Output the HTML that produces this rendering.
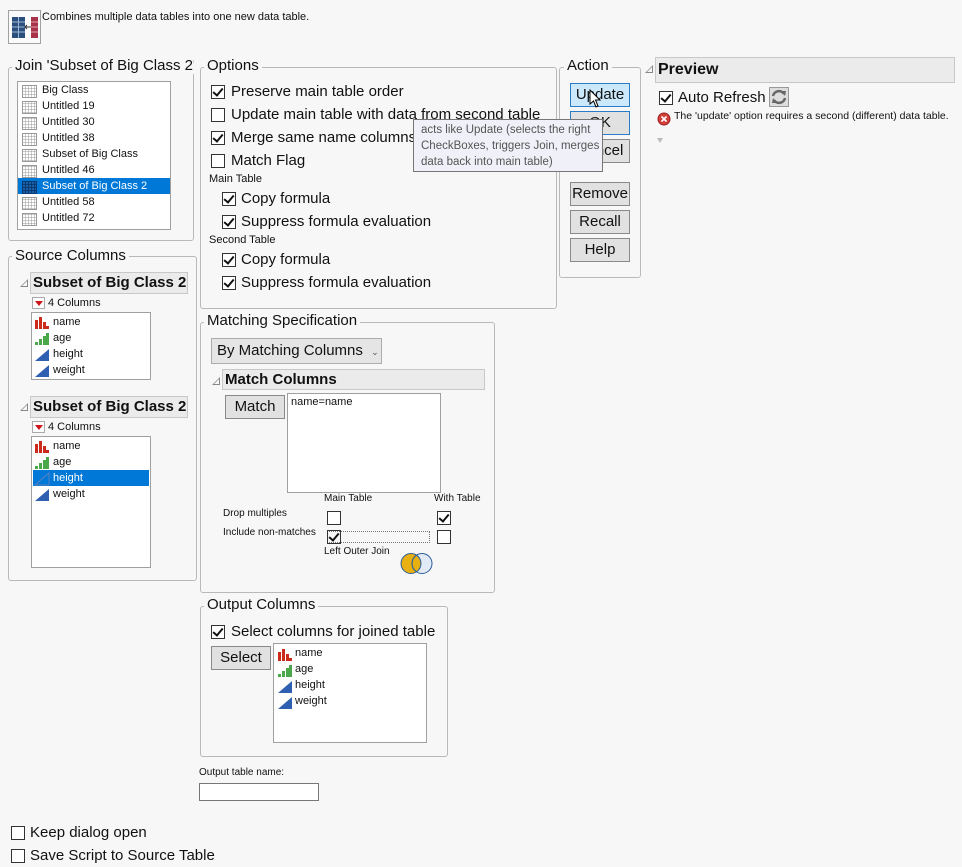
<!DOCTYPE html>
<html><head><meta charset="utf-8"><style>
*{box-sizing:border-box}
body{margin:0;width:962px;height:867px;background:#f7f7f7;font-family:"Segoe UI","Liberation Sans",sans-serif;color:#111;position:relative;overflow:hidden}
.a{position:absolute;white-space:nowrap}
.l15{font-size:15px;line-height:18px}
.s11{font-size:11px;line-height:14px}
.s10{font-size:10px;line-height:12px}
.grp{position:absolute;border:1px solid #b9b9b9;border-radius:3px}
.leg{position:absolute;background:#f7f7f7;padding:0 3px;font-size:15px;line-height:16px;white-space:nowrap}
.cb{position:absolute;width:14px;height:14px;border:1px solid #333;background:#fff}
.cb.k::after{content:"";position:absolute;left:3px;top:0px;width:4px;height:8px;border:solid #111;border-width:0 2px 2px 0;transform:rotate(40deg)}
.list{position:absolute;background:#fff;border:1px solid #a0a0a0}
.btn{position:absolute;background:#e1e1e1;border:1px solid #8a8a8a;font-size:15px;line-height:22px;text-align:center}
.hdr{position:absolute;background:#ebebeb;border:1px solid #c8c8c8;font-weight:bold;font-size:15px;line-height:19px;padding-left:2px}
.tri{position:absolute;width:0;height:0;border-left:8px solid transparent;border-bottom:8px solid #888}
.tri::after{content:"";position:absolute;left:-6px;top:2px;border-left:5px solid transparent;border-bottom:5px solid #f7f7f7}
.row{position:absolute;font-size:11px;line-height:16px;height:16px}
</style></head><body>

<!-- top icon -->
<div class="a" style="left:8px;top:10px;width:33px;height:34px;border:1px solid #a0a0a0;background:#fafafa">
<svg width="31" height="32" viewBox="0 0 31 32"><rect x="3" y="6" width="13" height="21" fill="#2b4f7d"/><g stroke="#9fb8d8" stroke-width="1"><line x1="3" y1="11" x2="16" y2="11"/><line x1="3" y1="16" x2="16" y2="16"/><line x1="3" y1="21" x2="16" y2="21"/><line x1="9.5" y1="6" x2="9.5" y2="27"/></g><rect x="22" y="6" width="7" height="21" fill="#a8324a"/><g stroke="#e2a0b0"><line x1="22" y1="11" x2="29" y2="11"/><line x1="22" y1="16" x2="29" y2="16"/><line x1="22" y1="21" x2="29" y2="21"/></g><line x1="16" y1="16" x2="22" y2="16" stroke="#333"/><path d="M18 14l-2 2 2 2" stroke="#333" fill="none"/></svg></div>
<div class="a s11" style="left:42px;top:10px">Combines multiple data tables into one new data table.</div>

<!-- Join group -->
<div class="grp" style="left:8px;top:67px;width:186px;height:174px"></div>
<div class="leg" style="left:12px;top:58px;width:182px;overflow:hidden">Join 'Subset of Big Class 2' w</div>
<div class="list" style="left:17px;top:81px;width:154px;height:149px">
<svg class="a" style="left:4px;top:3px" width="18" height="144">
<defs><pattern id="g" width="3" height="3" patternUnits="userSpaceOnUse"><rect width="3" height="3" fill="#fff"/><path d="M0 0H3M0 0V3" stroke="#999" stroke-width="1"/></pattern></defs>
<g fill="url(#g)" stroke="#999"><rect x="0.5" y="0.5" width="14" height="12"/><rect x="0.5" y="16.5" width="14" height="12"/><rect x="0.5" y="32.5" width="14" height="12"/><rect x="0.5" y="48.5" width="14" height="12"/><rect x="0.5" y="64.5" width="14" height="12"/><rect x="0.5" y="80.5" width="14" height="12"/><rect x="0.5" y="112.5" width="14" height="12"/><rect x="0.5" y="128.5" width="14" height="12"/></g></svg>
<div class="a" style="left:0;top:96px;width:152px;height:16px;background:#0078d7"></div>
<svg class="a" style="left:4px;top:99px" width="16" height="14"><rect x="0.5" y="0.5" width="14" height="12" fill="#1b5fa8" stroke="#0a3b70"/><path d="M0 3.5H15M0 6.5H15M0 9.5H15M3.5 0V13M6.5 0V13M9.5 0V13M12.5 0V13" stroke="#0a3b70"/></svg>
<div class="row" style="left:24px;top:0">Big Class</div>
<div class="row" style="left:24px;top:16px">Untitled 19</div>
<div class="row" style="left:24px;top:32px">Untitled 30</div>
<div class="row" style="left:24px;top:48px">Untitled 38</div>
<div class="row" style="left:24px;top:64px">Subset of Big Class</div>
<div class="row" style="left:24px;top:80px">Untitled 46</div>
<div class="row" style="left:24px;top:96px;color:#fff">Subset of Big Class 2</div>
<div class="row" style="left:24px;top:112px">Untitled 58</div>
<div class="row" style="left:24px;top:128px">Untitled 72</div>
</div>

<!-- Source Columns -->
<div class="grp" style="left:8px;top:256px;width:189px;height:325px"></div>
<div class="leg" style="left:12px;top:248px">Source Columns</div>

<div class="tri" style="left:20px;top:279px"></div>
<div class="hdr" style="left:30px;top:272px;width:158px;height:22px">Subset of Big Class 2</div>
<div class="a" style="left:32px;top:297px;width:13px;height:12px;border:1px solid #aaa;background:#fff"><div style="position:absolute;left:2px;top:3px;border-left:4px solid transparent;border-right:4px solid transparent;border-top:5px solid #d0141a"></div></div>
<div class="a s11" style="left:48px;top:296px">4 Columns</div>
<div class="list" style="left:31px;top:312px;width:120px;height:68px">
<svg class="a" style="left:2px;top:2px" width="18" height="64">
<g fill="#cc2a1a"><rect x="1" y="5" width="3" height="9"/><rect x="5" y="2" width="3" height="12"/><rect x="9" y="7" width="3" height="7"/><rect x="12" y="11" width="3" height="3"/></g>
<g fill="#4aa84a"><rect x="1" y="27" width="3" height="3"/><rect x="5" y="24" width="3" height="6"/><rect x="9" y="21" width="3" height="9"/><rect x="12" y="18" width="3" height="12"/></g>
<path d="M1 46L15 34V46Z" fill="#2f5fb0"/><path d="M1 62L15 50V62Z" fill="#2f5fb0"/></svg>
<div class="row" style="left:21px;top:1px">name</div>
<div class="row" style="left:21px;top:17px">age</div>
<div class="row" style="left:21px;top:33px">height</div>
<div class="row" style="left:21px;top:49px">weight</div>
</div>

<div class="tri" style="left:20px;top:403px"></div>
<div class="hdr" style="left:30px;top:396px;width:158px;height:22px">Subset of Big Class 2</div>
<div class="a" style="left:32px;top:421px;width:13px;height:12px;border:1px solid #aaa;background:#fff"><div style="position:absolute;left:2px;top:3px;border-left:4px solid transparent;border-right:4px solid transparent;border-top:5px solid #d0141a"></div></div>
<div class="a s11" style="left:48px;top:420px">4 Columns</div>
<div class="list" style="left:31px;top:436px;width:120px;height:132px">
<div class="a" style="left:1px;top:33px;width:116px;height:16px;background:#0078d7"></div>
<svg class="a" style="left:2px;top:2px" width="18" height="64">
<g fill="#cc2a1a"><rect x="1" y="5" width="3" height="9"/><rect x="5" y="2" width="3" height="12"/><rect x="9" y="7" width="3" height="7"/><rect x="12" y="11" width="3" height="3"/></g>
<g fill="#4aa84a"><rect x="1" y="27" width="3" height="3"/><rect x="5" y="24" width="3" height="6"/><rect x="9" y="21" width="3" height="9"/><rect x="12" y="18" width="3" height="12"/></g>
<path d="M1 46L15 34V46Z" fill="#0078d7" stroke="#5a80c0"/><path d="M1 62L15 50V62Z" fill="#2f5fb0"/></svg>
<div class="row" style="left:21px;top:1px">name</div>
<div class="row" style="left:21px;top:17px">age</div>
<div class="row" style="left:21px;top:33px;color:#fff">height</div>
<div class="row" style="left:21px;top:49px">weight</div>
</div>

<!-- Options -->
<div class="grp" style="left:200px;top:67px;width:357px;height:242px"></div>
<div class="leg" style="left:204px;top:58px">Options</div>
<div class="cb k" style="left:211px;top:85px"></div><div class="a l15" style="left:231px;top:83px">Preserve main table order</div>
<div class="cb" style="left:211px;top:108px"></div><div class="a l15" style="left:231px;top:106px">Update main table with data from second table</div>
<div class="cb k" style="left:211px;top:131px"></div><div class="a l15" style="left:231px;top:129px">Merge same name columns</div>
<div class="cb" style="left:211px;top:154px"></div><div class="a l15" style="left:231px;top:152px">Match Flag</div>
<div class="a s11" style="left:209px;top:172px">Main Table</div>
<div class="cb k" style="left:222px;top:192px"></div><div class="a l15" style="left:241px;top:190px">Copy formula</div>
<div class="cb k" style="left:222px;top:215px"></div><div class="a l15" style="left:241px;top:213px">Suppress formula evaluation</div>
<div class="a s11" style="left:209px;top:233px">Second Table</div>
<div class="cb k" style="left:222px;top:253px"></div><div class="a l15" style="left:241px;top:251px">Copy formula</div>
<div class="cb k" style="left:222px;top:276px"></div><div class="a l15" style="left:241px;top:274px">Suppress formula evaluation</div>

<!-- Action -->
<div class="grp" style="left:559px;top:67px;width:82px;height:211px"></div>
<div class="leg" style="left:564px;top:58px">Action</div>
<div class="btn" style="left:570px;top:83px;width:60px;height:24px;background:#cce8fb;border-color:#2a7cc8">Update</div>
<div class="btn" style="left:570px;top:111px;width:60px;height:24px;border-color:#2a7cc8">OK</div>
<div class="btn" style="left:570px;top:139px;width:60px;height:24px">Cancel</div>
<div class="btn" style="left:570px;top:182px;width:60px;height:24px">Remove</div>
<div class="btn" style="left:570px;top:210px;width:60px;height:24px">Recall</div>
<div class="btn" style="left:570px;top:238px;width:60px;height:24px">Help</div>
<svg class="a" style="left:589px;top:89px" width="14" height="20"><path d="M1 1V15L4.5 12L7 18L9 17L6.5 11H11Z" fill="#fff" stroke="#000"/></svg>

<!-- tooltip -->
<div class="a" style="left:413px;top:119px;width:190px;height:53px;background:#f0f0f8;border:1px solid #767676;color:#555;font-size:11.5px;line-height:16px;padding:2px 0 0 7px;white-space:normal">acts like Update (selects the right CheckBoxes, triggers Join, merges data back into main table)</div>

<!-- Preview -->
<div class="tri" style="left:645px;top:65px"></div>
<div class="hdr" style="left:655px;top:57px;width:300px;height:26px;font-size:16px;line-height:24px">Preview</div>
<div class="cb k" style="left:659px;top:91px"></div><div class="a l15" style="left:678px;top:89px">Auto Refresh</div>
<div class="a" style="left:769px;top:87px;width:20px;height:20px;background:#ddd;border:1px solid #999">
<svg width="18" height="18" viewBox="0 0 18 18"><path d="M3 8A6 6 0 0 1 14 6" stroke="#666" stroke-width="2.5" fill="none"/><path d="M15 10A6 6 0 0 1 4 12" stroke="#666" stroke-width="2.5" fill="none"/><path d="M11 3L16 3L15 8Z" fill="#666"/><path d="M7 15L2 15L3 10Z" fill="#666"/></svg></div>
<svg class="a" style="left:657px;top:112px" width="14" height="14"><circle cx="7" cy="7" r="6" fill="#d0403a" stroke="#a02020"/><path d="M4.5 4.5L9.5 9.5M9.5 4.5L4.5 9.5" stroke="#fff" stroke-width="1.6"/></svg>
<div class="a" style="left:674px;top:109px;font-size:10.5px;line-height:14px">The 'update' option requires a second (different) data table.</div>
<div class="a" style="left:657px;top:138px;width:0;height:0;border-left:3px solid transparent;border-right:3px solid transparent;border-top:5px solid #bbb"></div>

<!-- Matching Specification -->
<div class="grp" style="left:200px;top:322px;width:295px;height:271px"></div>
<div class="leg" style="left:204px;top:313px">Matching Specification</div>
<div class="a" style="left:211px;top:338px;width:171px;height:26px;background:#e5e5e5;border:1px solid #acacac;font-size:15px;line-height:24px;padding-left:5px">By Matching Columns <span style="font-size:9px;color:#555;margin-left:4px">&#8964;</span></div>
<div class="tri" style="left:212px;top:377px"></div>
<div class="hdr" style="left:222px;top:369px;width:263px;height:21px;line-height:19px">Match Columns</div>
<div class="btn" style="left:225px;top:395px;width:60px;height:24px">Match</div>
<div class="list" style="left:287px;top:393px;width:154px;height:100px;font-size:11px;line-height:16px;padding:0 3px">name=name</div>
<div class="a s10" style="left:324px;top:493px">Main Table</div>
<div class="a s10" style="left:434px;top:493px">With Table</div>
<div class="a s10" style="left:223px;top:508px">Drop multiples</div>
<div class="cb" style="left:327px;top:511px"></div>
<div class="cb k" style="left:437px;top:511px"></div>
<div class="a s10" style="left:223px;top:527px">Include non-matches</div>
<div class="a" style="left:327px;top:531px;width:103px;height:12px;border:1px dotted #777"></div>
<div class="cb k" style="left:327px;top:530px;background:transparent"></div>
<div class="cb" style="left:437px;top:530px"></div>
<div class="a s10" style="left:324px;top:546px">Left Outer Join</div>
<svg class="a" style="left:400px;top:552px" width="35" height="23"><circle cx="11" cy="11.5" r="10" fill="#e8b010" stroke="#2a5d9a"/><circle cx="22" cy="11.5" r="10" fill="#dde8f5" fill-opacity="0.85" stroke="#2a5d9a"/><path d="M16.5 3.2A10 10 0 0 1 16.5 19.8A10 10 0 0 1 16.5 3.2Z" fill="#e8b010" stroke="#2a5d9a"/></svg>

<!-- Output Columns -->
<div class="grp" style="left:200px;top:606px;width:248px;height:151px"></div>
<div class="leg" style="left:204px;top:597px">Output Columns</div>
<div class="cb k" style="left:211px;top:625px"></div><div class="a l15" style="left:231px;top:623px">Select columns for joined table</div>
<div class="btn" style="left:211px;top:646px;width:60px;height:24px">Select</div>
<div class="list" style="left:273px;top:643px;width:154px;height:100px">
<svg class="a" style="left:3px;top:3px" width="18" height="64">
<g fill="#cc2a1a"><rect x="1" y="5" width="3" height="9"/><rect x="5" y="2" width="3" height="12"/><rect x="9" y="7" width="3" height="7"/><rect x="12" y="11" width="3" height="3"/></g>
<g fill="#4aa84a"><rect x="1" y="27" width="3" height="3"/><rect x="5" y="24" width="3" height="6"/><rect x="9" y="21" width="3" height="9"/><rect x="12" y="18" width="3" height="12"/></g>
<path d="M1 46L15 34V46Z" fill="#2f5fb0"/><path d="M1 62L15 50V62Z" fill="#2f5fb0"/></svg>
<div class="row" style="left:21px;top:1px">name</div>
<div class="row" style="left:21px;top:17px">age</div>
<div class="row" style="left:21px;top:33px">height</div>
<div class="row" style="left:21px;top:49px">weight</div>
</div>

<div class="a s10" style="left:199px;top:767px">Output table name:</div>
<div class="a" style="left:199px;top:783px;width:120px;height:18px;background:#fff;border:1px solid #777"></div>

<div class="cb" style="left:11px;top:826px"></div><div class="a l15" style="left:30px;top:824px">Keep dialog open</div>
<div class="cb" style="left:11px;top:849px"></div><div class="a l15" style="left:30px;top:847px">Save Script to Source Table</div>

</body></html>
